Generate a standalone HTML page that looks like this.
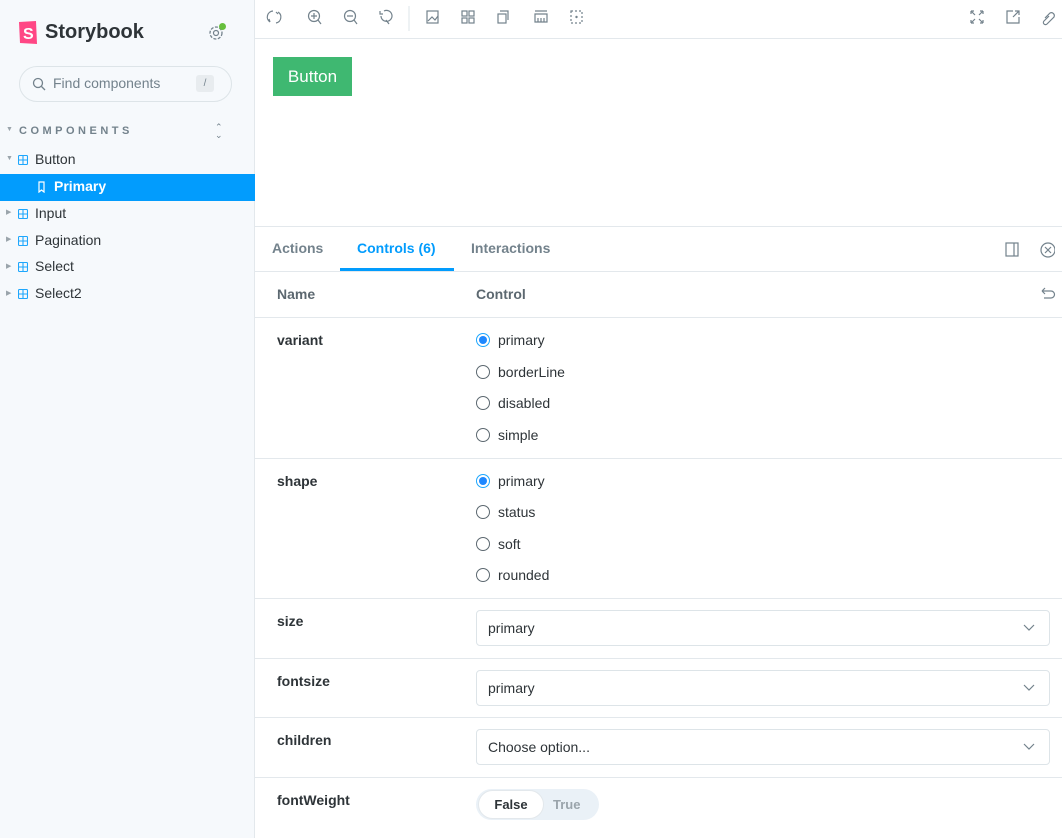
<!DOCTYPE html>
<html><head><meta charset="utf-8"><style>
*{box-sizing:border-box;margin:0;padding:0}
body{width:1062px;height:838px;overflow:hidden;font-family:"Liberation Sans",sans-serif;color:#2e3438;background:#fff;position:relative;font-size:14px}
.abs{position:absolute}
#side{left:0;top:0;width:255px;height:838px;background:#f6f9fc;border-right:1px solid #e3e8ec}
.t{position:absolute;white-space:nowrap}
.hr{position:absolute;height:1px;background:#e3e8ec}
.radio{position:absolute;width:14px;height:14px;border:1px solid #5c6870;border-radius:50%;background:#fff}
.radio.on{border-color:#1ea7fd}
.radio.on::after{content:"";position:absolute;left:2px;top:2px;width:8px;height:8px;border-radius:50%;background:#1e88ff}
.sel{position:absolute;left:476px;width:574px;height:36px;border:1px solid #dde4e8;border-radius:4px;background:#fff}
.sel span{position:absolute;left:11px;top:9px;font-size:14px;color:#2e3438}
.sel svg{position:absolute;right:14px;top:13px}
.ico{position:absolute;top:9px}
</style></head><body>
<div id="side" class="abs">
  <svg class="abs" style="left:18px;top:20px" width="20" height="25" viewBox="0 0 20 25"><path d="M1 2 L18 1 L19 24 L2 23Z" fill="#ff4785"/><text x="5" y="19" font-family="Liberation Sans" font-weight="bold" font-size="16" fill="#fff">S</text></svg>
  <div class="t" style="left:45px;top:21px;font-size:20px;font-weight:bold;color:#2e3438">Storybook</div>
  <svg class="abs" style="left:208px;top:24px" width="18" height="18" viewBox="0 0 18 18"><circle cx="8" cy="9" r="6" fill="none" stroke="#73828c" stroke-width="1.3" stroke-dasharray="3 1.5"/><circle cx="8" cy="9" r="2.5" fill="none" stroke="#73828c" stroke-width="1.2"/></svg>
  <div class="abs" style="left:219px;top:23px;width:7px;height:7px;border-radius:50%;background:#66bf3c"></div>
  <div class="abs" style="left:19px;top:66px;width:213px;height:36px;border:1px solid #dde4e8;border-radius:18px;background:#f6f9fc"></div>
  <svg class="abs" style="left:32px;top:77px" width="14" height="14" viewBox="0 0 14 14"><circle cx="6" cy="6" r="4.5" fill="none" stroke="#73828c" stroke-width="1.3"/><path d="M9.5 9.5L13 13" stroke="#73828c" stroke-width="1.3"/></svg>
  <div class="t" style="left:53px;top:75px;color:#73828c;font-size:14px">Find components</div>
  <div class="abs" style="left:196px;top:75px;width:18px;height:17px;background:#e8ecef;border-radius:3px;font-size:10px;color:#73828c;text-align:center;line-height:17px">/</div>
  <div class="t" style="left:6px;top:126px;font-size:7px;color:#9aa4ab">▼</div>
  <div class="t" style="left:19px;top:125px;font-size:11px;font-weight:bold;letter-spacing:3.5px;color:#73828c">COMPONENTS</div>
  <div class="t" style="left:215px;top:123px;font-size:9px;color:#73828c;line-height:8px">⌃<br>⌄</div>
  <div class="t" style="left:6px;top:155px;font-size:7px;color:#9aa4ab">▼</div>
  <div class="abs" style="left:0;top:174px;width:255px;height:27px;background:#029cfd"></div>
  <svg class="abs" style="left:38px;top:181px" width="7" height="12" viewBox="0 0 7 12"><path d="M1 1H6V11L3.5 9L1 11Z" fill="none" stroke="#fff" stroke-width="1.2"/></svg>
  <div class="t" style="left:54px;top:178px;font-size:14px;font-weight:bold;color:#fff">Primary</div>
  <svg width="0" height="0" style="position:absolute"><defs><g id="cmp"><rect x="0.5" y="0.5" width="9" height="9" rx="1" fill="none" stroke="#1ea7fd" stroke-width="1.1"/><path d="M5 0.5V9.5M0.5 5H9.5" stroke="#1ea7fd" stroke-width="1.1"/></g></defs></svg>
  <svg class="abs" style="left:18px;top:155px" width="10" height="10"><use href="#cmp"/></svg>
  <div class="t" style="left:35px;top:151px">Button</div>
  <div class="t" style="left:6px;top:208px;font-size:7px;color:#9aa4ab">▶</div>
  <svg class="abs" style="left:18px;top:209px" width="10" height="10"><use href="#cmp"/></svg>
  <div class="t" style="left:35px;top:205px">Input</div>
  <div class="t" style="left:6px;top:235px;font-size:7px;color:#9aa4ab">▶</div>
  <svg class="abs" style="left:18px;top:236px" width="10" height="10"><use href="#cmp"/></svg>
  <div class="t" style="left:35px;top:232px">Pagination</div>
  <div class="t" style="left:6px;top:262px;font-size:7px;color:#9aa4ab">▶</div>
  <svg class="abs" style="left:18px;top:262px" width="10" height="10"><use href="#cmp"/></svg>
  <div class="t" style="left:35px;top:258px">Select</div>
  <div class="t" style="left:6px;top:289px;font-size:7px;color:#9aa4ab">▶</div>
  <svg class="abs" style="left:18px;top:289px" width="10" height="10"><use href="#cmp"/></svg>
  <div class="t" style="left:35px;top:285px">Select2</div>
</div>

<!-- toolbar -->
<svg class="abs" style="left:255px;top:0" width="807" height="39" viewBox="0 0 807 39" fill="none" stroke="#73828c" stroke-width="1.2">
  <path d="M18 11a6 6 0 0 0-3 11M23 12a6 6 0 0 1-2 11M15 22l-1-3M21 12l2 2"/>
  <circle cx="59" cy="16" r="5.5"/><path d="M63 20l3 4M56 16h6M59 13v6"/>
  <circle cx="95" cy="16" r="5.5"/><path d="M99 20l3 4M92 16h6"/>
  <path d="M126 16a5.5 5.5 0 1 0 3-5M125 11v3h3M131 20l3 4"/>
  <path d="M154 6v25" stroke="#e3e8ec"/>
  <rect x="172" y="11" width="11" height="12"/><path d="M173 21l4-4 3 3 3-4"/>
  <rect x="207" y="11" width="5" height="5"/><rect x="214" y="11" width="5" height="5"/><rect x="207" y="18" width="5" height="5"/><rect x="214" y="18" width="5" height="5"/>
  <rect x="243" y="14" width="8" height="9"/><path d="M245 11h8v9"/>
  <path d="M280 11h12M280 14h12v8h-12zM283 18v4M286 18v4M289 18v4"/>
  <rect x="316" y="11" width="11" height="12" stroke-dasharray="2 2"/><circle cx="321.5" cy="17" r=".6"/>
  <path d="M716 11l4 4M716 11v3M716 11h3M728 11l-4 4M728 11v3M728 11h-3M716 23l4-4M716 23v-3M716 23h3M728 23l-4-4M728 23v-3M728 23h-3"/>
  <path d="M758 11h-6v12h12v-6M760 11h4v4M764 11l-6 6"/>
  <path d="M794 16l-5 5a2 2 0 0 0 3 3l7-7a3 3 0 0 0-4-4l-5 5"/>
</svg>
<div class="hr" style="left:255px;top:38px;width:807px"></div>
<div class="abs" style="left:273px;top:57px;width:79px;height:39px;background:#3fb871;color:#fff;font-size:17px;text-align:center;line-height:39px">Button</div>

<!-- tabs -->
<div class="hr" style="left:255px;top:226px;width:807px"></div>
<div class="t" style="left:272px;top:240px;font-weight:bold;color:#73828c">Actions</div>
<div class="t" style="left:357px;top:240px;font-weight:bold;color:#029cfd">Controls (6)</div>
<div class="abs" style="left:340px;top:268px;width:114px;height:3px;background:#029cfd"></div>
<div class="t" style="left:471px;top:240px;font-weight:bold;color:#73828c">Interactions</div>
<svg class="abs" style="left:1005px;top:242px" width="50" height="16" fill="none" stroke="#73828c" stroke-width="1.2"><rect x="1" y="1" width="12" height="13"/><path d="M9 1v13"/><circle cx="43" cy="8" r="7"/><path d="M40 5l6 6M46 5l-6 6"/></svg>
<div class="hr" style="left:255px;top:271px;width:807px"></div>

<div class="t" style="left:277px;top:286px;font-weight:bold;color:#5c6870">Name</div>
<div class="t" style="left:476px;top:286px;font-weight:bold;color:#5c6870">Control</div>
<svg class="abs" style="left:1040px;top:287px" width="16" height="14" fill="none" stroke="#73828c" stroke-width="1.2"><path d="M2 4h9a3.5 3.5 0 0 1 0 7H4M2 4l3-3M2 4l3 3"/></svg>
<div class="hr" style="left:255px;top:317px;width:807px"></div>

<div class="t" style="left:277px;top:332px;font-weight:bold">variant</div>
<div class="radio on" style="left:476px;top:333px"></div><div class="t" style="left:498px;top:332px">primary</div>
<div class="radio" style="left:476px;top:365px"></div><div class="t" style="left:498px;top:364px">borderLine</div>
<div class="radio" style="left:476px;top:396px"></div><div class="t" style="left:498px;top:395px">disabled</div>
<div class="radio" style="left:476px;top:428px"></div><div class="t" style="left:498px;top:427px">simple</div>
<div class="hr" style="left:255px;top:458px;width:807px"></div>

<div class="t" style="left:277px;top:473px;font-weight:bold">shape</div>
<div class="radio on" style="left:476px;top:474px"></div><div class="t" style="left:498px;top:473px">primary</div>
<div class="radio" style="left:476px;top:505px"></div><div class="t" style="left:498px;top:504px">status</div>
<div class="radio" style="left:476px;top:537px"></div><div class="t" style="left:498px;top:536px">soft</div>
<div class="radio" style="left:476px;top:568px"></div><div class="t" style="left:498px;top:567px">rounded</div>
<div class="hr" style="left:255px;top:598px;width:807px"></div>

<div class="t" style="left:277px;top:613px;font-weight:bold">size</div>
<div class="sel" style="top:610px"><span>primary</span><svg width="12" height="8" fill="none" stroke="#73828c" stroke-width="1.2"><path d="M1 1l5 5 5-5"/></svg></div>
<div class="hr" style="left:255px;top:658px;width:807px"></div>

<div class="t" style="left:277px;top:673px;font-weight:bold">fontsize</div>
<div class="sel" style="top:670px"><span>primary</span><svg width="12" height="8" fill="none" stroke="#73828c" stroke-width="1.2"><path d="M1 1l5 5 5-5"/></svg></div>
<div class="hr" style="left:255px;top:717px;width:807px"></div>

<div class="t" style="left:277px;top:732px;font-weight:bold">children</div>
<div class="sel" style="top:729px"><span>Choose option...</span><svg width="12" height="8" fill="none" stroke="#73828c" stroke-width="1.2"><path d="M1 1l5 5 5-5"/></svg></div>
<div class="hr" style="left:255px;top:777px;width:807px"></div>

<div class="t" style="left:277px;top:792px;font-weight:bold">fontWeight</div>
<div class="abs" style="left:476px;top:789px;width:123px;height:31px;border-radius:16px;background:#eaf1f7"></div>
<div class="abs" style="left:478px;top:790px;width:66px;height:29px;border-radius:15px;background:#fff;border:1px solid #e3e8ec;text-align:center;line-height:27px;font-weight:bold;font-size:13px">False</div>
<div class="t" style="left:553px;top:797px;font-size:13px;font-weight:bold;color:#9aa4ab">True</div>
</body></html>
